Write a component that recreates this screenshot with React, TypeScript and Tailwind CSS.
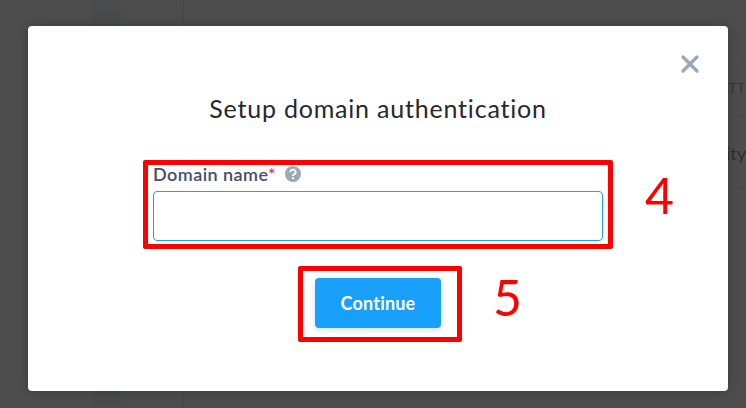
import { X } from 'lucide-react';

function HelpIcon() {
  return (
    <svg width="16" height="16" viewBox="0 0 16 16" className="block">
      <circle cx="8" cy="8" r="8" fill="#9aa9b6" />
      <path d="M5.4 6.2a2.6 2.5 0 1 1 3.9 2.1c-.9.5-1.3.9-1.3 1.6" fill="none" stroke="#fff" strokeWidth="1.8" />
      <circle cx="8" cy="12.2" r="1.1" fill="#fff" />
    </svg>
  );
}

function PageBehind() {
  return (
    <div className="flex h-full">
      <div className="w-[92px] shrink-0" />
      <div className="w-[30px] shrink-0 bg-[#494b4d]" />
      <div className="w-[62px] shrink-0 border-r border-[#474747]" />
      <div className="flex-1 flex flex-col items-end overflow-hidden">
        <div className="h-[63px] w-full border-b border-[#484848]" />
        <div className="h-[53px] w-full border-b border-[#484848] flex items-center justify-end">
          <span className="text-[13px] tracking-[1px] text-[#333]">ATT</span>
        </div>
        <div className="h-[72px] w-full border-b border-[#484848] flex items-center justify-end pt-[3px]">
          <span className="text-[18px] text-[#2e2e2e]">ity</span>
        </div>
      </div>
    </div>
  );
}

export default function App() {
  return (
    <div className="relative h-[408px] w-[746px] overflow-hidden bg-[#4d4d4d] font-['Lato',sans-serif]">
      <PageBehind />

      {/* Modal */}
      <div className="absolute left-[28px] top-[26px] flex h-[365px] w-[700px] flex-col items-center rounded-[4px] bg-white pt-[68px] shadow-[0_0_12px_rgba(0,0,0,0.25)]">
        <button className="absolute right-[24px] top-[24px] text-[#9aa9b6]">
          <X size={28} strokeWidth={2.8} />
        </button>

        <h2 className="text-[25px] leading-[28px] tracking-[0.8px] text-[#26282e]">Setup domain authentication</h2>

        {/* Domain name field */}
        <div className="relative mt-[38px] w-[470px] rounded-[2px] border-[5px] border-[#ff0000] px-[5px] pb-[3px]">
          <label className="flex h-[26px] items-start gap-[9px] pt-[1px] text-[18px] leading-[16px] font-semibold tracking-[0.45px] text-[#474d66]">
            <span>
              Domain name<span className="text-[#f0365c]">*</span>
            </span>
            <HelpIcon />
          </label>
          <input
            type="text"
            className="block h-[50px] w-full rounded-[4px] border border-[#1ba1f2] bg-white outline-none"
          />
          <span className="absolute left-[497px] top-[0px] text-[50px] leading-[60px] text-[#ff0000]">4</span>
        </div>

        {/* Continue */}
        <div className="relative mt-[17px] ml-[4px] flex h-[76px] w-[164px] items-center justify-center rounded-[2px] border-[5px] border-[#ff0000] pb-[2px]">
          <button className="mr-[4px] h-[50px] w-[126px] rounded-[4px] bg-[#18a0fb] text-[18px] font-bold tracking-[0.2px] text-white shadow-[0_2px_6px_rgba(24,100,170,0.2)]">
            Continue
          </button>
          <span className="absolute left-[190px] top-[-4px] text-[50px] leading-[60px] text-[#ff0000]">5</span>
        </div>
      </div>
    </div>
  );
}
